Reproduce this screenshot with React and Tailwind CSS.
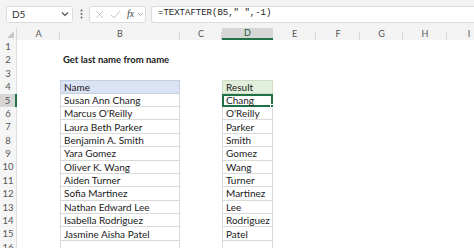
const cols = [
  { name: "A", w: "w-[43px]" },
  { name: "B", w: "w-[120px]" },
  { name: "C", w: "w-[42px]" },
  { name: "D", w: "w-[51px]" },
  { name: "E", w: "w-[43px]" },
  { name: "F", w: "w-[44px]" },
  { name: "G", w: "w-[43px]" },
  { name: "H", w: "w-[44px]" },
  { name: "I", w: "w-[44px]" },
]

const names = [
  ["Susan Ann Chang", "Chang"],
  ["Marcus O'Reilly", "O'Reilly"],
  ["Laura Beth Parker", "Parker"],
  ["Benjamin A. Smith", "Smith"],
  ["Yara Gomez", "Gomez"],
  ["Oliver K. Wang", "Wang"],
  ["Aiden Turner", "Turner"],
  ["Sofia Martinez", "Martinez"],
  ["Nathan Edward Lee", "Lee"],
  ["Isabella Rodriguez", "Rodriguez"],
  ["Jasmine Aisha Patel", "Patel"],
]

const font = { fontFamily: "Lato, 'Open Sans', sans-serif" }

function RowNum({ n, active }) {
  return (
    <div
      className={
        "w-[17px] shrink-0 flex items-center justify-center text-[9.5px] text-[#555] " +
        (active ? "bg-[#d6d6d6] border-r-2 border-[#217346]" : "bg-[#f5f5f5] border-r border-[#e0e0e0]")
      }
    >
      {n}
    </div>
  )
}

function Row({ n, children, active }) {
  return (
    <div className="flex h-[13.4px]">
      <RowNum n={n} active={active} />
      {children}
    </div>
  )
}

export default function App() {
  return (
    <div className="w-[474px] h-[248px] overflow-hidden bg-white text-[#1a1a1a]" style={font}>
      {/* formula bar */}
      <div className="h-[28px] bg-[#f3f3f3] flex items-center pl-[6px]">
        <div className="w-[67px] h-[17px] bg-white border border-[#dcdcdc] rounded-[3px] flex items-center justify-between pl-[5px] pr-[3px]">
          <span className="text-[10px] text-[#333]">D5</span>
          <svg width="8" height="6" viewBox="0 0 8 6">
            <path d="M1 1.5 L4 4.5 L7 1.5" stroke="#555" strokeWidth="1.2" fill="none" />
          </svg>
        </div>
        <div className="w-[16px] flex justify-center">
          <svg width="3" height="10" viewBox="0 0 3 10">
            <circle cx="1.5" cy="1.5" r="1" fill="#666" />
            <circle cx="1.5" cy="5" r="1" fill="#666" />
            <circle cx="1.5" cy="8.5" r="1" fill="#666" />
          </svg>
        </div>
        <div className="w-[57px] h-[17px] bg-white border border-[#dcdcdc] rounded-[3px] flex items-center pl-[5px] gap-[6px]">
          <svg width="9" height="9" viewBox="0 0 9 9">
            <path d="M1 1 L8 8 M8 1 L1 8" stroke="#c8c8c8" strokeWidth="1" fill="none" />
          </svg>
          <svg width="11" height="9" viewBox="0 0 11 9">
            <path d="M1 5 L4 8 L10 1" stroke="#c8c8c8" strokeWidth="1" fill="none" />
          </svg>
          <span className="text-[10px] italic text-[#444] leading-none" style={{ fontFamily: "'Liberation Serif', serif" }}>
            fx
          </span>
          <svg width="7" height="5" viewBox="0 0 7 5" className="-ml-[3px]">
            <path d="M1 1 L3.5 3.5 L6 1" stroke="#aaa" strokeWidth="1" fill="none" />
          </svg>
        </div>
        <div className="ml-[5px] flex-1 h-[17px] bg-white border border-[#dcdcdc] border-r-0 rounded-l-[3px] flex items-center pl-[6px]">
          <span className="text-[9px] text-[#222]" style={{ fontFamily: "'Liberation Mono', monospace" }}>
            =TEXTAFTER(B5," ",-1)
          </span>
        </div>
      </div>

      {/* column headers */}
      <div className="flex h-[12px] bg-[#f3f3f3]">
        <div className="w-[17px] shrink-0 flex items-end justify-end pr-[2px] pb-[2px] border-r border-[#d6d6d6]">
          <svg width="7" height="7" viewBox="0 0 7 7">
            <path d="M7 0 L7 7 L0 7 Z" fill="#c8c8c8" />
          </svg>
        </div>
        {cols.map((c) => (
          <div
            key={c.name}
            className={
              c.w +
              " shrink-0 flex items-center justify-center text-[9px] relative " +
              (c.name === "D" ? "bg-[#d6d6d6] border-b-2 border-[#217346] text-[#1d5c38]" : "text-[#555]")
            }
          >
            {c.name}
            <span className="absolute right-0 bottom-0 h-[8px] w-px bg-[#d6d6d6]" />
          </div>
        ))}
      </div>

      {/* rows */}
      <div className="text-[10px] leading-none">
        <Row n={1}>
          <div />
        </Row>
        <Row n={2}>
          <div className="w-[43px] shrink-0" />
          <div className="flex items-center pl-[3px] font-bold text-[9.5px] whitespace-nowrap">Get last name from name</div>
        </Row>
        <Row n={3}>
          <div />
        </Row>
        <Row n={4}>
          <div className="w-[43px] shrink-0" />
          <div className="w-[120px] shrink-0 bg-[#dae3f3] border border-[#c5cfe0] flex items-center pl-[3px]">Name</div>
          <div className="w-[42px] shrink-0" />
          <div className="w-[51px] shrink-0 bg-[#e2efda] border border-[#cfdcc8] flex items-center pl-[3px]">Result</div>
        </Row>
        {names.map(([full, last], i) => (
          <Row key={full} n={5 + i} active={i === 0}>
            <div className="w-[43px] shrink-0" />
            <div className="w-[120px] shrink-0 border-x border-b border-[#d9d9d9] flex items-center pl-[3px] whitespace-nowrap">
              {full}
            </div>
            <div className="w-[42px] shrink-0" />
            {i === 0 ? (
              <div className="w-[51px] shrink-0 border-2 border-[#217346] flex items-center pl-[2px] relative">
                {last}
                <span className="absolute -right-[3px] -bottom-[3px] w-[4px] h-[4px] bg-[#217346] border border-white" />
              </div>
            ) : (
              <div className="w-[51px] shrink-0 border-x border-b border-[#d9d9d9] flex items-center pl-[3px] whitespace-nowrap">
                {last}
              </div>
            )}
          </Row>
        ))}
        <Row n={16}>
          <div className="w-[43px] shrink-0" />
          <div className="w-[120px] shrink-0 border-x border-[#d9d9d9]" />
          <div className="w-[42px] shrink-0" />
          <div className="w-[51px] shrink-0 border-x border-[#d9d9d9]" />
        </Row>
      </div>
    </div>
  )
}
